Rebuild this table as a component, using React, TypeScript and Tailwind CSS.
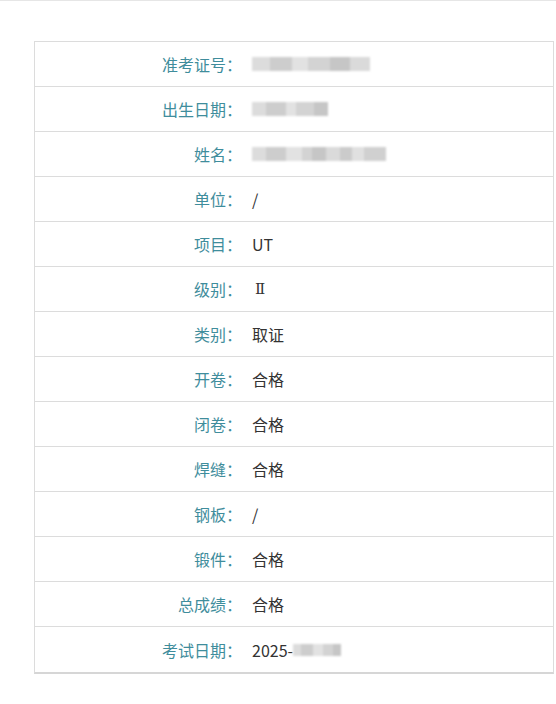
import React from "react";

const rows: { label: string; value: React.ReactNode }[] = [
  { label: "准考证号", value: <Blur widths={[18, 22, 16, 22, 20, 20]} /> },
  { label: "出生日期", value: <Blur widths={[14, 20, 10, 18, 14]} /> },
  { label: "姓名", value: <Blur widths={[14, 20, 16, 10, 14, 14, 12, 12, 22]} /> },
  { label: "单位", value: "/" },
  { label: "项目", value: "UT" },
  { label: "级别", value: <span className="pl-[3px]" style={{ fontFamily: '"DejaVu Serif", "Liberation Serif", serif', fontSize: 15 }}>Ⅱ</span> },
  { label: "类别", value: "取证" },
  { label: "开卷", value: "合格" },
  { label: "闭卷", value: "合格" },
  { label: "焊缝", value: "合格" },
  { label: "钢板", value: "/" },
  { label: "锻件", value: "合格" },
  { label: "总成绩", value: "合格" },
  {
    label: "考试日期",
    value: (
      <span className="flex items-center">
        2025-
        <Blur widths={[8, 12, 10, 10, 8]} small />
      </span>
    ),
  },
];

function Blur({ widths, small }: { widths: number[]; small?: boolean }) {
  const shades = ["#dcdcdc", "#cdcdcd", "#e2e2e2", "#d3d3d3", "#c6c6c6", "#dadada", "#cbcbcb", "#e0e0e0", "#d0d0d0"];
  return (
    <span className={`flex items-center ${small ? "h-[12px]" : "h-[14px]"} bg-[#ececec] blur-[1px]`}>
      {widths.map((w, i) => (
        <span key={i} className="block h-full" style={{ width: w, background: shades[i % shades.length] }} />
      ))}
    </span>
  );
}

export default function App() {
  return (
    <div
      className="w-[556px] h-[704px] bg-white border-t border-[#e6e6e6]"
      style={{ fontFamily: '"Noto Sans CJK SC", "Noto Sans", sans-serif' }}
    >
      <div className="mt-[40px] ml-[34px] w-[520px] border-l border-r border-t border-[#dcdcdc] border-b-2 border-b-[#d6d6d6]">
        {rows.map((r, i) => (
          <div
            key={r.label}
            className={`flex h-[45px] items-center ${i < rows.length - 1 ? "border-b border-[#dcdcdc]" : ""}`}
          >
            <div className="w-[207px] text-right text-[16px] text-[#3f8d9c]">{r.label}：</div>
            <div className="pl-[10px] text-[16px] text-[#333333] flex items-center">{r.value}</div>
          </div>
        ))}
      </div>
    </div>
  );
}
